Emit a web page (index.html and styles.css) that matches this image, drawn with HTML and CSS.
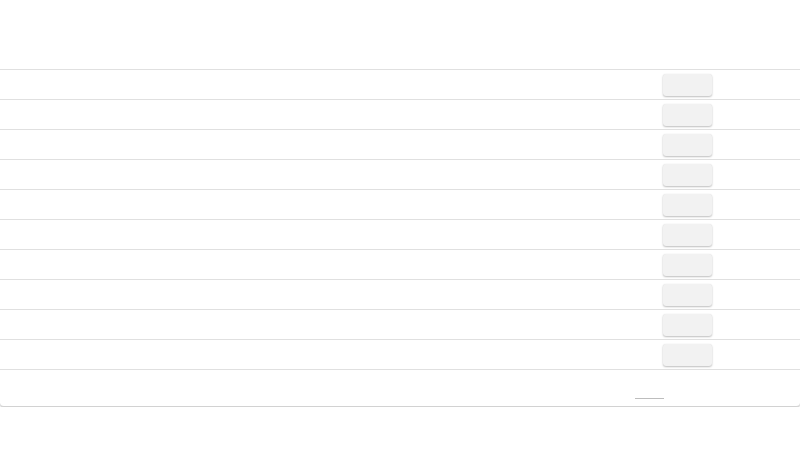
FILE: index.html
```html
<!DOCTYPE html>
<html>
<head>
<meta charset="utf-8">
<link rel="stylesheet" href="styles.css">
</head>
<body>
<div class="paper">
  <div class="head"></div>
  <div class="rows">
    <div class="row"><div class="cell-btn"><span class="btn"></span></div></div>
    <div class="row"><div class="cell-btn"><span class="btn"></span></div></div>
    <div class="row"><div class="cell-btn"><span class="btn"></span></div></div>
    <div class="row"><div class="cell-btn"><span class="btn"></span></div></div>
    <div class="row"><div class="cell-btn"><span class="btn"></span></div></div>
    <div class="row"><div class="cell-btn"><span class="btn"></span></div></div>
    <div class="row"><div class="cell-btn"><span class="btn"></span></div></div>
    <div class="row"><div class="cell-btn"><span class="btn"></span></div></div>
    <div class="row"><div class="cell-btn"><span class="btn"></span></div></div>
    <div class="row"><div class="cell-btn"><span class="btn"></span></div></div>
  </div>
  <div class="foot"><span class="select"></span></div>
</div>
</body>
</html>
```
FILE: styles.css
```css
html, body { margin: 0; padding: 0; background: #fff; font-family: Roboto, "Liberation Sans", sans-serif; }
.paper {
  width: 800px;
  background: #fff;
  border-radius: 0 0 4px 4px;
  border-bottom: 1px solid #d2d2d2;
  box-shadow: 0 1px 1px 0 rgba(0,0,0,0.12), 0 1px 3px 0 rgba(0,0,0,0.08);
}
.head { height: 70px; border-bottom: 1px solid #e0e0e0; box-sizing: border-box; }
.rows { display: flex; flex-direction: column; }
.row {
  height: 30px;
  box-sizing: border-box;
  border-bottom: 1px solid #e0e0e0;
  display: flex;
  align-items: center;
  padding-left: 663px;
}
.cell-btn { display: flex; }
.btn {
  display: block;
  width: 49px;
  height: 22px;
  background: #f2f2f2;
  border-radius: 3px;
  box-shadow: 0 1px 2px rgba(0,0,0,0.25), 0 0 1px rgba(0,0,0,0.08);
}
.foot {
  height: 36px;
  display: flex;
  align-items: flex-end;
  padding-left: 635px;
  padding-bottom: 7px;
  box-sizing: border-box;
}
.select { display: block; width: 29px; height: 1px; background: #bdbdbd; }
```
